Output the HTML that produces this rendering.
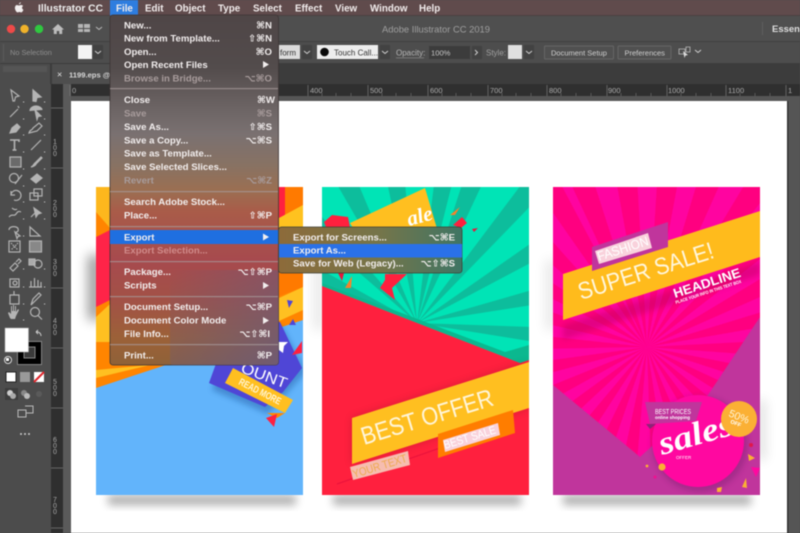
<!DOCTYPE html>
<html><head><meta charset="utf-8"><style>
html,body{margin:0;padding:0;width:800px;height:533px;background:#4b4b4b;overflow:hidden}
svg{display:block;filter:blur(.5px)}
text{font-family:"Liberation Sans","DejaVu Sans",sans-serif}
.m text{font-size:9.6px;fill:#f2eeee;font-weight:700;stroke:none}
.m .d{fill:#a89c9c}
.mb{font-size:9.8px;fill:#f1ecec;font-weight:700}
.r{font-size:7.5px;fill:#aaa}
.v{font-size:7px;fill:#aaa}
.ic{fill:none;stroke:#b4b4b4;stroke-width:1.2}
</style></head><body>
<svg width="800" height="533" viewBox="0 0 800 533" xmlns="http://www.w3.org/2000/svg">
<defs>
<filter id="b3" x="-30%" y="-30%" width="160%" height="160%"><feGaussianBlur stdDeviation="3"/></filter>
<filter id="b4" x="-30%" y="-60%" width="160%" height="220%"><feGaussianBlur stdDeviation="4.500"/></filter>
<filter id="b7" x="-150%" y="-30%" width="400%" height="160%"><feGaussianBlur stdDeviation="6"/></filter>
<clipPath id="p1"><rect x="96" y="187" width="207" height="308"/></clipPath>
<clipPath id="p2"><rect x="322" y="187" width="207" height="308"/></clipPath>
<clipPath id="p3"><rect x="553" y="187" width="207" height="308"/></clipPath>
<polygon id="a" points="0,0 0,-200 25,-200"/>
<polygon id="s" points="0,0 0,-160 20,-160"/>
<polygon id="d" points="0,0 0,-130 16,-130"/>
<polygon id="w" points="0,0 0,-185 29,-185"/>
<linearGradient id="mg" x1="0" y1="15" x2="0" y2="365" gradientUnits="userSpaceOnUse">
<stop offset="0" stop-color="#4f4647"/><stop offset=".15" stop-color="#534c4c"/><stop offset=".26" stop-color="#6b6363"/><stop offset=".34" stop-color="#7a7171"/><stop offset=".43" stop-color="#887263"/><stop offset=".5" stop-color="#9b6f52"/><stop offset=".56" stop-color="#a95c49"/><stop offset=".7" stop-color="#a74a4e"/><stop offset=".82" stop-color="#a25246"/><stop offset=".92" stop-color="#9c6138"/><stop offset="1" stop-color="#8f6238"/>
</linearGradient>
<linearGradient id="mh" x1="170" y1="270" x2="279" y2="365" gradientUnits="userSpaceOnUse"><stop offset="0" stop-color="#6d5a78" stop-opacity="0"/><stop offset="1" stop-color="#6d5a78" stop-opacity=".9"/></linearGradient>
<linearGradient id="sg" x1="279" y1="0" x2="462" y2="0" gradientUnits="userSpaceOnUse"><stop offset="0" stop-color="#8d6b3a"/><stop offset=".55" stop-color="#75754a"/><stop offset="1" stop-color="#3f7564"/></linearGradient>
<linearGradient id="bl" x1="0" y1="0" x2="1" y2="0"><stop offset="0" stop-color="#000" stop-opacity="0"/><stop offset="1" stop-color="#000" stop-opacity=".35"/></linearGradient>
</defs>

<!-- chrome -->
<rect width="800" height="533" fill="#4c4c4c"/>
<rect y="16" width="800" height="25" fill="#4f4f4f"/>
<rect y="41" width="800" height="1" fill="#414141"/>
<rect y="42" width="800" height="21" fill="#4d4d4d"/>
<rect y="63" width="800" height="21" fill="#3c3c3c"/>
<rect x="52" y="64" width="58" height="20" fill="#4e4e4e"/>
<rect x="0" y="64" width="50" height="469" fill="#4c4c4c"/>
<rect x="3" y="66" width="44" height="6" fill="#555"/>
<rect x="64" y="84" width="736" height="12" fill="#2f2f2f"/>
<rect x="64" y="96" width="736" height="5" fill="#565656"/>
<rect x="51" y="84" width="12" height="449" fill="#2f2f2f"/>
<rect x="63" y="84" width="8" height="449" fill="#5a5a5a"/>
<rect x="71" y="101" width="716" height="432" fill="#fff"/>
<rect x="787" y="101" width="1.5" height="432" fill="#333"/>
<rect x="788.5" y="96" width="11.5" height="437" fill="#555"/>

<!-- shadows -->
<g fill="#000">
<rect x="88" y="255" width="14" height="65" opacity=".4" filter="url(#b7)"/>
<rect x="108" y="495" width="188" height="10" opacity=".32" filter="url(#b4)"/>
<rect x="333" y="495" width="188" height="10" opacity=".32" filter="url(#b4)"/>
<rect x="563" y="495" width="188" height="10" opacity=".32" filter="url(#b4)"/>
<rect x="546" y="260" width="10" height="70" opacity=".1" filter="url(#b7)"/>
<rect x="314" y="260" width="10" height="70" opacity=".1" filter="url(#b7)"/>
<rect x="757" y="400" width="8" height="60" opacity=".15" filter="url(#b7)"/>
</g>

<!-- poster 1 -->
<g clip-path="url(#p1)">
<rect x="96" y="187" width="207" height="308" fill="#62b4fb"/>
<polygon points="96,187 303,187 303,320 96,388" fill="#ff8500"/>
<polygon points="96,187 110,187 110,228 96,212" fill="#fdb71d"/>
<polygon points="96,237 110,230 110,300 96,307" fill="#ff2448"/>
<polygon points="96,317 110,304 110,342 96,342" fill="#ffc021"/>
<polygon points="96,370 150,365 96,378" fill="#ffc021"/>
<polygon points="279,187 303,187 303,217 279,219" fill="#ff7a00"/>
<polygon points="279,187 285,187 285,222 279,226" fill="#ff2040"/>
<polygon points="279,218 303,205 303,232 279,232" fill="#ffc21f"/>
<polygon points="279,272 303,272 303,287 279,296" fill="#ff7a00"/>
<polygon points="279,298 303,287 303,310 279,321" fill="#ffc021"/>
<polygon points="287,300 293,301 289,308" fill="#4f46d6"/>
<polygon points="289,325 296,325 293,319" fill="#4f46d6"/>
<polygon points="212,390 232,335 282,326 306,372 268,414" fill="#0b3f88" opacity=".35" filter="url(#b3)"/>
<polygon points="209,383 230,325 280,322 302,368 283,392 265,407" fill="#4f46d6"/>
<polygon points="267,413 285,413 277,418" fill="#ff8a00"/>
<polygon points="266,418 277,414 274,427" fill="#ff2040"/>
<polygon points="225,383 233,368 293,400 285,413" fill="#ffbf20"/>
<text transform="translate(240,372) rotate(20)" font-size="15" fill="#fff" textLength="48" lengthAdjust="spacingAndGlyphs">OUNT</text>
<text transform="translate(238,384) rotate(27)" font-size="10" font-weight="700" fill="#fff4d0" textLength="46" lengthAdjust="spacingAndGlyphs">READ MORE</text>
<polygon points="278,342 288,342 284,346 283,353 279,350" fill="#fff"/>
<polygon points="292,355 302,341 302,353" fill="#ff2040"/>
</g>

<!-- poster 2 -->
<g clip-path="url(#p2)">
<rect x="322" y="187" width="207" height="308" fill="#00e4b6"/>
<g fill="#0dbd9c" transform="translate(417,323)">
<use href="#a" transform="rotate(-88) scale(1,1)"/><use href="#a" transform="rotate(-68)"/><use href="#a" transform="rotate(-49)"/><use href="#a" transform="rotate(-30)"/><use href="#a" transform="rotate(-12)"/><use href="#a" transform="rotate(7)"/><use href="#a" transform="rotate(18)"/><use href="#a" transform="rotate(37)"/><use href="#a" transform="rotate(55)"/><use href="#a" transform="rotate(74)"/><use href="#a" transform="rotate(92)"/>
</g>
<polygon points="322,283 322,286 520,363 529,360 529,345 505,352" fill="#0bb88f"/>
<polygon points="322,286 520,363 529,360 529,495 322,495" fill="#ff203e"/>
<polygon points="352,418 529,362 529,408 352,464" fill="#000" opacity=".15" filter="url(#b4)"/>
<line x1="337" y1="484" x2="440" y2="448" stroke="#e8123c" stroke-width="1"/>
<polygon points="352,418 529,362 529,408 352,464" fill="#ffbf20"/>
<polygon points="438,434 513,410 515,433 438,458" fill="#ff7d00"/>
<polygon points="443,440 498,423 500,435 445,452" fill="#f9d2dc"/>
<polygon points="350,467 408,451 410,465 353,480" fill="#f6bdb0"/>
<text transform="translate(364,445) rotate(-17)" font-size="25" fill="#fff5d8" textLength="137" lengthAdjust="spacingAndGlyphs">BEST OFFER</text>
<text transform="translate(445,449) rotate(-17)" font-size="11.500" fill="#fff" textLength="54" lengthAdjust="spacingAndGlyphs">BEST SALE</text>
<text transform="translate(354,478) rotate(-17)" font-size="11.500" fill="#eeaa50" textLength="56" lengthAdjust="spacingAndGlyphs">YOUR TEXT</text>
<polygon points="350,223 425,188 438,232 360,240" fill="#ffbf20"/>
<polygon points="324,222 332,215 348,217 351,232 328,232" fill="#ff203e"/>
<text transform="translate(409,226) rotate(-15)" font-size="21" font-weight="700" font-style="italic" fill="#fff" style="font-family:'Liberation Serif'">ale</text>
<polygon points="385,274 407,274 392,288 395,300 380,288 385,280" fill="#ff203e"/>
<polygon points="345,288 352,276 351,288" fill="#f5822a"/>
<polygon points="338,273 344,273 342,281" fill="#e6173c"/>
<polygon points="450,215 460,207 455,215" fill="#f5822a"/>
<polygon points="453,225 462,217 467,223 461,228" fill="#ff203e"/>
<polygon points="472,229 478,228 474,232" fill="#e6173c"/>
</g>

<!-- poster 3 -->
<g clip-path="url(#p3)">
<rect x="553" y="187" width="207" height="308" fill="#ff04a0"/>
<g fill="#ff0080" transform="translate(647,347)">
<use href="#a" transform="rotate(-25)"/><use href="#a" transform="rotate(-10.5)"/><use href="#a" transform="rotate(3.5)"/><use href="#a" transform="rotate(17)"/><use href="#a" transform="rotate(31)"/>
<use href="#s" transform="rotate(45)"/><use href="#s" transform="rotate(59)"/><use href="#s" transform="rotate(73)"/><use href="#s" transform="rotate(87)"/>
<use href="#d" transform="rotate(101)"/><use href="#d" transform="rotate(115)"/><use href="#d" transform="rotate(129)"/><use href="#d" transform="rotate(143)"/><use href="#d" transform="rotate(157)"/><use href="#d" transform="rotate(171)"/><use href="#d" transform="rotate(185)"/><use href="#d" transform="rotate(199)"/><use href="#d" transform="rotate(213)"/><use href="#d" transform="rotate(227)"/><use href="#d" transform="rotate(241)"/>
<use href="#a" transform="rotate(255)"/><use href="#a" transform="rotate(269)"/><use href="#a" transform="rotate(283)"/><use href="#a" transform="rotate(297)"/><use href="#a" transform="rotate(311)"/><use href="#a" transform="rotate(325)"/>
</g>
<polygon points="553,385 640,457 708,395 760,317 760,495 553,495" fill="#c0359c"/>
<polygon points="563,325 760,262 760,275 563,340" fill="#b8005a" opacity=".4" filter="url(#b3)"/>
<polygon points="563,274 760,211 760,257 563,320" fill="#ffbb1c"/>
<polygon points="592,247 668,222 668,247 592,271" fill="#c0359c"/>
<polygon points="595,251 648,233 652,248 599,264" fill="#f9d2dc"/>
<text transform="translate(599,261) rotate(-18)" font-size="13" fill="#fff" textLength="53" lengthAdjust="spacingAndGlyphs">FASHION</text>
<text transform="translate(581,300) rotate(-17.500)" font-size="24" fill="#fff6dc" textLength="141" lengthAdjust="spacingAndGlyphs">SUPER SALE!</text>
<text transform="translate(675,298) rotate(-18)" font-size="13" font-weight="700" fill="#fff" textLength="70" lengthAdjust="spacingAndGlyphs">HEADLINE</text>
<text transform="translate(676,304) rotate(-18)" font-size="4.500" font-weight="700" fill="#fff" textLength="69" lengthAdjust="spacingAndGlyphs">PLACE YOUR INFO IN THIS TEXT BOX</text>
<circle cx="700" cy="444" r="48" fill="#7a1a70" opacity=".4" filter="url(#b3)"/>
<circle cx="698" cy="441" r="46" fill="#ff08a0"/>
<polygon points="645,402 702,402 696,421 650,424" fill="#c0359c"/>
<polygon points="646,424 656,424 650,429" fill="#8c2478"/>
<text x="655" y="414" font-size="7.500" fill="#fff" textLength="36" lengthAdjust="spacingAndGlyphs">BEST PRICES</text>
<text x="655" y="419" font-size="4.800" font-weight="700" fill="#fff" textLength="35" lengthAdjust="spacingAndGlyphs">online shopping</text>
<text transform="translate(662,455) rotate(-16)" font-size="33" font-weight="700" font-style="italic" fill="#fff" textLength="76" lengthAdjust="spacingAndGlyphs" style="font-family:'Liberation Serif'">sales</text>
<text x="676" y="459" font-size="4.500" fill="#fff">OFFER</text>
<circle cx="739" cy="419" r="18" fill="#fbb034"/>
<text transform="translate(728,416) rotate(22)" font-size="10.500" fill="#fff5d8">50%</text>
<text transform="translate(730,423) rotate(22)" font-size="5.500" font-weight="700" fill="#fff">OFF</text>
<circle cx="662" cy="467" r="3.600" fill="#fbb034"/><circle cx="647" cy="466" r="1.400" fill="#fbb034"/><circle cx="655" cy="477" r="1.500" fill="#f01090"/><circle cx="751" cy="445" r="2" fill="#e0184a"/>
<polygon points="748,454 755,458 749,461" fill="#fbb034"/><polygon points="751,467 760,468 756,477" fill="#ff08a0"/><polygon points="742,487 746,478 747,488" fill="#fbb034"/><polygon points="717,488 722,487 721,492 717,492" fill="#fbb034"/>
</g>

<!-- menu bar -->
<rect width="800" height="16" fill="#604b4c"/>
<rect y="15" width="800" height="1" fill="#4a4040"/>
<rect x="110" width="28" height="15.500" fill="#2e7ddf"/>
<path d="M19 3.500c.6-.8 1.300-1.200 1.900-1.300 0 .9-.7 1.900-1.900 2zM16.800 5c.8 0 1.400.5 2.100.5s1.300-.6 2.300-.5c.8 0 1.500.4 1.900 1-1.500 1-1.300 3 .3 3.700-.4 1.100-1.300 2.700-2.200 2.700-.7 0-1-.4-1.800-.4s-1.200.4-1.800.4c-1.200 0-2.700-2.500-2.700-4.500 0-1.500 1-2.900 1.900-2.900z" fill="#f2eeee"/>
<text x="38" y="11.500" font-weight="700" font-size="10.200" fill="#eee" textLength="65" lengthAdjust="spacingAndGlyphs">Illustrator CC</text>
<text class="mb" x="116" y="11.500">File</text><text class="mb" x="145" y="11.500">Edit</text><text class="mb" x="175" y="11.500">Object</text><text class="mb" x="218" y="11.500">Type</text><text class="mb" x="253" y="11.500">Select</text><text class="mb" x="295" y="11.500">Effect</text><text class="mb" x="335" y="11.500">View</text><text class="mb" x="370" y="11.500">Window</text><text class="mb" x="419" y="11.500">Help</text>

<!-- title bar -->
<circle cx="11" cy="29" r="4.200" fill="#ed4a48"/><circle cx="24.500" cy="29" r="4.200" fill="#f0b22a"/><circle cx="39" cy="29" r="4.200" fill="#2fc840"/>
<path d="M52 29.500l6-5.500 6 5.500h-1.800V34h-3v-3h-2.400v3h-3v-4.500z" fill="#bcbcbc"/>
<path d="M78 24h5v4h-5zM84 24h6v4h-6zM78 29h5v3h-5zM84 29h6v3h-6z" fill="#b5b5b5"/>
<path d="M96 27l3 2.500 3-2.500" fill="none" stroke="#bbb"/>
<text x="382" y="32.500" font-size="9.600" fill="#9f9f9f" textLength="108" lengthAdjust="spacingAndGlyphs">Adobe Illustrator CC 2019</text>
<rect x="762" y="22" width="1" height="13" fill="#5f5f5f"/>
<text x="772" y="32" font-size="9.500" font-weight="700" fill="#dedede">Essent</text>

<!-- control bar -->
<rect x="3" y="44" width="1" height="17" fill="#5b5b5b"/>
<text x="10" y="55" font-size="7.400" fill="#8e8e8e">No Selection</text>
<rect x="78" y="45" width="14" height="14" fill="#f4f4f4"/>
<rect x="93" y="45" width="10" height="14" fill="#424242"/>
<path d="M95 51l3 2.500 3-2.500" fill="none" stroke="#cfcfcf"/>
<rect x="279" y="45" width="21" height="14" fill="#dcdcdc"/>
<text x="280" y="55.500" font-size="8" fill="#333">form</text>
<rect x="302" y="45" width="10" height="14" fill="#424242"/>
<path d="M304 51l3 2.500 3-2.500" fill="none" stroke="#cfcfcf"/>
<rect x="317" y="45" width="61" height="14" fill="#ededed"/>
<circle cx="324.500" cy="52" r="4.300" fill="#0a0a0a"/>
<text x="334" y="55.500" font-size="8" fill="#333">Touch Call...</text>
<rect x="380" y="45" width="10" height="14" fill="#424242"/>
<path d="M382 51l3 2.500 3-2.500" fill="none" stroke="#cfcfcf"/>
<text x="396" y="55.500" font-size="8" fill="#b5b5b5">Opacity:</text>
<rect x="396" y="57.500" width="28" height=".7" fill="#8a8a8a"/>
<rect x="429" y="46" width="41" height="13" fill="#3c3c3c"/>
<text x="431" y="55.500" font-size="7.600" fill="#c6c6c6">100%</text>
<rect x="472" y="46" width="10" height="13" fill="#424242"/>
<path d="M475 50l2.500 2.500-2.500 2.500" fill="none" stroke="#cfcfcf"/>
<text x="486" y="55.500" font-size="8" fill="#a0a0a0">Style:</text>
<rect x="508" y="45" width="14" height="14" fill="#dfdfdf"/>
<rect x="524" y="45" width="10" height="14" fill="#424242"/>
<path d="M526 51l3 2.500 3-2.500" fill="none" stroke="#cfcfcf"/>
<rect x="544.500" y="46" width="69" height="13" rx="1" fill="#505050" stroke="#666"/>
<text x="551" y="55.500" font-size="7.500" fill="#d0d0d0">Document Setup</text>
<rect x="618" y="46" width="53" height="13" rx="1" fill="#505050" stroke="#666"/>
<text x="624.500" y="55.500" font-size="7.500" fill="#d0d0d0">Preferences</text>
<path d="M679 49h6v5h-6zM686 47h4v5h-4z" fill="none" stroke="#bbb" stroke-width=".8"/><path d="M683 51l5 4-2.500.5-1 2.500z" fill="#ddd"/>
<path d="M695 50l3 2.500 3-2.500" fill="none" stroke="#cfcfcf"/>

<!-- tab -->
<text x="57" y="77.500" font-size="9" fill="#e4e4e4">×</text>
<text x="69" y="77.500" font-size="7.600" font-weight="700" fill="#d8d8d8">1199.eps @</text>

<!-- rulers -->
<text class="r" x="72" y="93">0</text><text class="r" x="310" y="93">400</text><text class="r" x="370" y="93">500</text><text class="r" x="430" y="93">600</text><text class="r" x="490" y="93">700</text><text class="r" x="549" y="93">800</text><text class="r" x="608" y="93">900</text><text class="r" x="668" y="93">1000</text><text class="r" x="728" y="93">1100</text><text class="r" x="788" y="93">1</text>
<path d="M70 85v11M308 85v11M368 85v11M428 85v11M488 85v11M547 85v11M607 85v11M667 85v11M726 85v11M786 85v11" stroke="#777" stroke-width=".7"/>
<path d="M322 93v3M336 93v3M351 93v3M382 93v3M396 93v3M411 93v3M442 93v3M456 93v3M471 93v3M502 93v3M516 93v3M531 93v3M561 93v3M576 93v3M591 93v3M621 93v3M636 93v3M651 93v3M681 93v3M696 93v3M711 93v3M740 93v3M755 93v3M770 93v3" stroke="#6a6a6a" stroke-width=".7"/>
<text class="v" x="53" y="144">1</text><text class="v" x="53" y="150">0</text><text class="v" x="53" y="156">0</text>
<text class="v" x="53" y="205">2</text><text class="v" x="53" y="211">0</text><text class="v" x="53" y="217">0</text>
<text class="v" x="53" y="264">3</text><text class="v" x="53" y="270">0</text><text class="v" x="53" y="276">0</text>
<text class="v" x="53" y="323">4</text><text class="v" x="53" y="329">0</text><text class="v" x="53" y="335">0</text>
<text class="v" x="53" y="384">5</text><text class="v" x="53" y="390">0</text><text class="v" x="53" y="396">0</text>
<text class="v" x="53" y="442">6</text><text class="v" x="53" y="448">0</text><text class="v" x="53" y="454">0</text>
<text class="v" x="53" y="502">7</text><text class="v" x="53" y="508">0</text><text class="v" x="53" y="514">0</text>
<path d="M51 108h12M51 168h12M51 228h12M51 288h12M51 348h12M51 408h12M51 468h12M51 528h12" stroke="#777" stroke-width=".7"/>

<!-- tools -->
<g class="ic">
<path d="M11 90l8 6-3.500 1-1 4-1.500 0z"/><path d="M33 90l8 7-4 .5-1 4-3-.5z" fill="#b4b4b4"/>
<path d="M10 117l8-8M18 106l1 2"/><path d="M30 111c0-3 3-5 6-5s6 2 6 4M35 110l6 6-3 .5-1 3z" fill="#b4b4b4"/>
<path d="M10 133l2-5 5-4 3 3-4 5z" fill="#b4b4b4"/><path d="M29 133c1-4 3-2 4-5l6-5 3 3-5 5z"/>
<path d="M10 140h9v2M14.500 140v10M12.500 150h4" stroke-width="1.600"/><path d="M31 150l10-10"/>
<rect x="10" y="157" width="11" height="10" fill="#6a6a6a"/><path d="M31 167c3-1 3-4 4-4l6-6 1 1-6 6c0 1-3 3-5 3z" fill="#b4b4b4"/>
<circle cx="14" cy="178" r="4.500"/><path d="M15 184l7-9"/><path d="M31 179l6-5 5 4-6 5z" fill="#b4b4b4"/>
<path d="M11 195a5 5 0 1 1 3 5M11 191v4h4"/><rect x="30" y="193" width="8" height="7"/><rect x="34" y="189" width="8" height="7"/>
<path d="M9 217c3-4 5 0 7-3s3-3 5-2M12 208c2 2 4 2 5 1"/><path d="M31 217l6-6M34 208l7 5-3 1-2 3z" fill="#b4b4b4"/>
<path d="M9 230c0-3 4-4 7-3s3 5 0 5M15 232l5 4-2 .5-1 2z"/><path d="M30 236v-9l10 9z"/>
<rect x="9" y="241" width="11" height="11"/><path d="M11 243l7 7M18 243l-7 7" stroke-dasharray="1.500 1"/>
<rect x="29.500" y="241" width="12" height="11" fill="#888"/>
<path d="M10 268l5-5 3 3-5 5zM16 262l3-3 2 2-3 3"/><rect x="29" y="259" width="6" height="6" fill="#aaa"/><circle cx="38" cy="264" r="4"/>
<rect x="10" y="279" width="9" height="8"/><circle cx="15" cy="283" r="2"/><path d="M29 287h13M31 287v-6M34.500 287v-9M38 287v-7M41 287v-5"/>
<path d="M10 295h9v9h-9zM14 291v4"/><path d="M31 305l2-6 6-6 2 2-6 6z"/>
<circle cx="35" cy="312" r="4.500"/><path d="M38 315.500l4 4"/>
</g>
<path d="M10 318l-2-5 1-1 2 2V306h1v5h1v-6h1v6h1v-5h1v6l2-3 1 1-3 6-1 3H11z" fill="#b4b4b4"/>
<path d="M23 102h1.200M44 102h1.200M23 119h1.200M44 119h1.200M23 135h1.200M44 135h1.200M23 152h1.200M44 152h1.200M23 169h1.200M44 169h1.200M23 186h1.200M44 186h1.200M23 202h1.200M44 202h1.200M23 219h1.200M44 219h1.200M23 236h1.200M23 269h1.200M44 269h1.200M23 287h1.200M44 287h1.200M23 304h1.200M44 304h1.200M23 320h1.200" stroke="#c8c8c8"/>
<rect x="17.500" y="341.500" width="24" height="23" fill="#000" stroke="#999" stroke-width=".8"/>
<rect x="24" y="347" width="11" height="11" fill="#3a3a3a" stroke="#888"/>
<rect x="5" y="328" width="23.500" height="24" fill="#fff" stroke="#aaa" stroke-width=".5"/>
<path d="M36 332a4 4 0 0 1 5 4M36 332l2-2M36 332l2 2" fill="none" stroke="#ccc"/>
<circle cx="8" cy="360" r="3.500" fill="#333" stroke="#ddd"/><rect x="6" y="358" width="3" height="3" fill="#fff"/>
<rect x="6" y="372" width="10" height="10" fill="#fff" stroke="#222"/><rect x="20" y="372" width="10" height="10" fill="#999"/><rect x="34" y="372" width="10" height="10" fill="#fff"/><path d="M34 382l10-10" stroke="#e0262c" stroke-width="2"/>
<rect x="5" y="388" width="13" height="12" fill="#3d3d3d"/>
<circle cx="10" cy="393" r="3" fill="#ccc"/><circle cx="13" cy="396" r="3" fill="#aaa"/><circle cx="24" cy="393" r="3" fill="#888"/><circle cx="27" cy="396" r="3" fill="#bbb"/><circle cx="39" cy="394" r="3" fill="#5a5a5a"/>
<path d="M18 410h8v7h-8zM25 406h8v7h-7" fill="none" stroke="#bbb"/>
<circle cx="21" cy="434" r="1" fill="#ccc"/><circle cx="25" cy="434" r="1" fill="#ccc"/><circle cx="29" cy="434" r="1" fill="#ccc"/>

<!-- file menu -->
<g class="m">
<rect x="110" y="15" width="168.500" height="350" rx="3" fill="url(#mg)" stroke="#3d3535" stroke-width=".8"/>
<rect x="170" y="270" width="108.500" height="95" rx="3" fill="url(#mh)"/>
<rect x="110" y="230" width="168.500" height="14" fill="#1f6fe0"/>
<g fill="#a79b9b" opacity=".75"><rect x="110" y="88" width="168" height="1.200"/><rect x="110" y="191" width="168" height="1.200"/><rect x="110" y="226" width="168" height="1.200"/><rect x="110" y="261" width="168" height="1.200"/><rect x="110" y="296" width="168" height="1.200"/><rect x="110" y="344" width="168" height="1.200"/></g>
<text x="124" y="28.500">New...</text><text x="272" y="28.500" text-anchor="end">⌘N</text>
<text x="124" y="41.500">New from Template...</text><text x="272" y="41.500" text-anchor="end">⇧⌘N</text>
<text x="124" y="55">Open...</text><text x="272" y="55" text-anchor="end">⌘O</text>
<text x="124" y="68">Open Recent Files</text>
<text class="d" x="124" y="81.500">Browse in Bridge...</text><text class="d" x="272" y="81.500" text-anchor="end">⌥⌘O</text>
<text x="124" y="103">Close</text><text x="275" y="103" text-anchor="end">⌘W</text>
<text class="d" x="124" y="116.500">Save</text><text class="d" x="272" y="116.500" text-anchor="end">⌘S</text>
<text x="124" y="130">Save As...</text><text x="272" y="130" text-anchor="end">⇧⌘S</text>
<text x="124" y="143.500">Save a Copy...</text><text x="272" y="143.500" text-anchor="end">⌥⌘S</text>
<text x="124" y="156.500">Save as Template...</text>
<text x="124" y="170">Save Selected Slices...</text>
<text class="d" x="124" y="183.500">Revert</text><text class="d" x="272" y="183.500" text-anchor="end">⌥⌘Z</text>
<text x="124" y="205">Search Adobe Stock...</text>
<text x="124" y="218.500">Place...</text><text x="272" y="218.500" text-anchor="end">⇧⌘P</text>
<text x="124" y="240.500">Export</text>
<text x="124" y="253.500" style="fill:#d08a8a">Export Selection...</text>
<text x="124" y="275">Package...</text><text x="272" y="275" text-anchor="end">⌥⇧⌘P</text>
<text x="124" y="288.500">Scripts</text>
<text x="124" y="310">Document Setup...</text><text x="272" y="310" text-anchor="end">⌥⌘P</text>
<text x="124" y="323.500">Document Color Mode</text>
<text x="124" y="337">File Info...</text><text x="270" y="337" text-anchor="end">⌥⇧⌘I</text>
<text x="124" y="358.500">Print...</text><text x="272" y="358.500" text-anchor="end">⌘P</text>
</g>
<path d="M263 61l6 3.500-6 3.500zM263 233.500l6 3.500-6 3.500zM263 282l6 3.500-6 3.500zM263 317l6 3.500-6 3.500z" fill="#f2eeee"/>

<!-- submenu -->
<g class="m">
<rect x="278.500" y="227" width="183.500" height="46" rx="3" fill="url(#sg)" stroke="#3f3f35" stroke-width=".8"/>
<rect x="279" y="244" width="183" height="13.500" fill="#2a71e8"/>
<text x="293" y="240.500">Export for Screens...</text><text x="455" y="240.500" text-anchor="end">⌥⌘E</text>
<text x="293" y="253.500">Export As...</text>
<text x="293" y="266.500">Save for Web (Legacy)...</text><text x="455" y="266.500" text-anchor="end">⌥⇧⌘S</text>
</g>
</svg>
</body></html>
